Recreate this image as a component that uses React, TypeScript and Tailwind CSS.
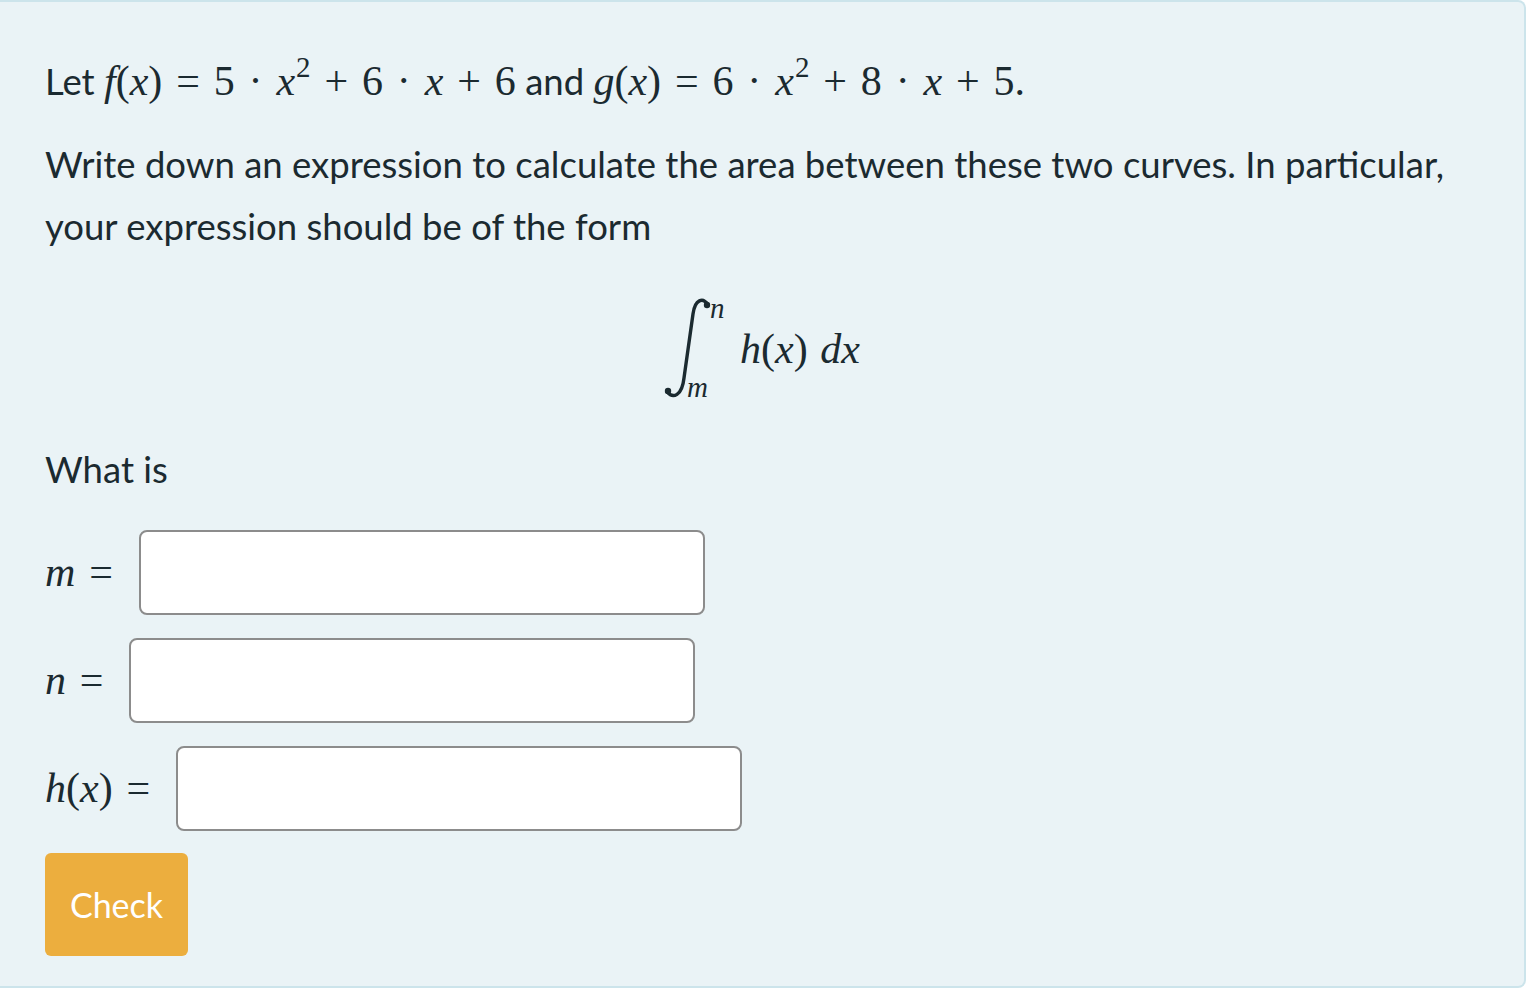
import React from 'react';

const textFont = { fontFamily: '"Lato", "Liberation Sans", sans-serif' };
const mathFont = { fontFamily: '"Liberation Serif", "DejaVu Serif", serif' };

// small helpers for the math bits
function M({ children, className = '' }: { children: React.ReactNode; className?: string }) {
  return (
    <span className={`text-[42px] whitespace-nowrap ${className}`} style={mathFont}>
      {children}
    </span>
  );
}

function V({ children }: { children: React.ReactNode }) {
  return <i className="italic">{children}</i>;
}

function Op({ children }: { children: React.ReactNode }) {
  return <span className="mx-[0.33em]">{children}</span>;
}

function Sq() {
  return <sup className="text-[29px] -top-[0.62em] ml-[1px]">2</sup>;
}

function AnswerRow({ label, width }: { label: React.ReactNode; width: string }) {
  return (
    <div className="flex items-center h-[85px]">
      <M className="text-[#1b2a30] mr-[12px]">{label}</M>
      <input
        type="text"
        className={`${width} h-[85px] bg-white border-2 border-[#8c8c8c] rounded-[8px] outline-none`}
      />
    </div>
  );
}

export default function App() {
  return (
    <div className="w-[1527px] h-[993px] bg-white">
      <div
        className="w-[1526px] h-[988px] bg-[#eaf3f6] border-t-2 border-r-2 border-b-2 border-[#cce4eb] rounded-r-[8px] pl-[45px] pt-[48px] text-[#1b2a30]"
        style={textFont}
      >
        {/* Question */}
        <p className="text-[36.5px] leading-[62px]">
          Let <M><V>f</V>(<V>x</V>)<Op>=</Op>5<Op>·</Op><V>x</V><Sq /><Op>+</Op>6<Op>·</Op><V>x</V><Op>+</Op>6</M> and{' '}
          <M><V>g</V>(<V>x</V>)<Op>=</Op>6<Op>·</Op><V>x</V><Sq /><Op>+</Op>8<Op>·</Op><V>x</V><Op>+</Op>5.</M>
        </p>

        <p className="text-[36.5px] leading-[62px] mt-[21px]">
          Write down an expression to calculate the area between these two curves. In particular,
          <br />
          your expression should be of the form
        </p>

        {/* Integral display */}
        <div className="flex justify-center h-[140px] mt-[22px] pr-[45px]">
          <div className="flex items-center">
            <div className="relative w-[76px] h-[110px]">
              <svg width="48" height="104" viewBox="0 0 48 104" className="absolute left-0 top-[2px]">
                <path d="M44 9 C39 1 31 3 29 18 L20 82 C18 100 9 103 3 96" fill="none" stroke="#1b2a30" strokeWidth="3.4" strokeLinecap="round" />
                <circle cx="43" cy="9" r="3.2" fill="#1b2a30" />
                <circle cx="4" cy="95" r="3.2" fill="#1b2a30" />
              </svg>
              <span className="absolute left-[46px] top-[-7px] text-[29px] italic" style={mathFont}>n</span>
              <span className="absolute left-[23px] top-[72px] text-[29px] italic" style={mathFont}>m</span>
            </div>
            <M><V>h</V>(<V>x</V>)<span className="ml-[0.3em]"><V>dx</V></span></M>
          </div>
        </div>

        <p className="text-[36.5px] leading-[62px] mt-[19px]">What is</p>

        {/* Answers */}
        <div className="flex flex-col gap-[23px] mt-[30px]">
          <AnswerRow label={<><V>m</V><Op>=</Op></>} width="w-[566px]" />
          <AnswerRow label={<><V>n</V><Op>=</Op></>} width="w-[566px]" />
          <AnswerRow label={<><V>h</V>(<V>x</V>)<Op>=</Op></>} width="w-[566px]" />
        </div>

        <button className="mt-[22px] w-[143px] h-[103px] rounded-[6px] bg-[#ecae3e] text-white text-[34px]" style={textFont}>
          Check
        </button>
      </div>
    </div>
  );
}
